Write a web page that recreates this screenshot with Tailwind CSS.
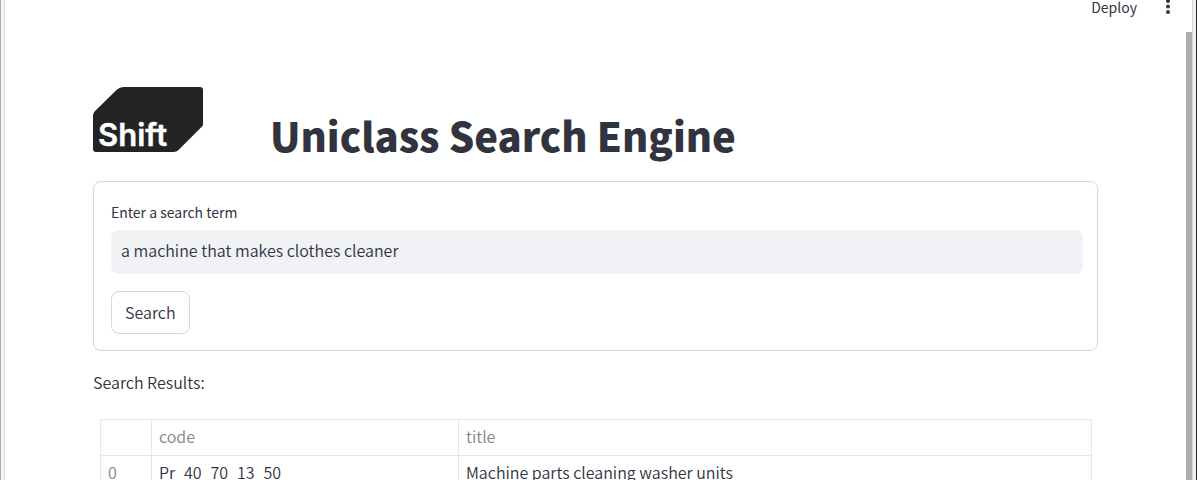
<!DOCTYPE html>
<html lang="en">
<head>
<meta charset="utf-8">
<meta name="viewport" content="width=device-width, initial-scale=1">
<title>Uniclass Search Engine</title>
<script src="https://cdn.jsdelivr.net/npm/@tailwindcss/browser@4"></script>
</head>
<body class="flex h-screen overflow-hidden bg-white font-['Noto_Sans_CJK_JP','Noto_Sans',sans-serif] text-base font-[350] text-[#31333f]">
  <div class="w-[5px] shrink-0 border-x border-l-[#acabac] border-r-[#dcdadb] bg-[#f5f3f4]"></div>
  <div class="min-w-0 flex-1">
    <header class="flex h-3.5 items-center justify-end gap-[27px] pr-3.5">
      <button type="button" class="text-sm leading-3.5 font-normal">Deploy</button>
      <button type="button" aria-label="Main menu" class="flex">
        <svg class="h-4 w-2" viewBox="0 0 8 16" fill="currentColor"><circle cx="4" cy="2" r="2"/><circle cx="4" cy="7.500" r="2"/><circle cx="4" cy="13" r="2"/></svg>
      </button>
    </header>
    <main class="px-[88px] pt-[73px]">
      <div class="flex gap-[67px]">
        <svg class="h-[65px] w-[110px] shrink-0" viewBox="0 0 110 65" role="img" aria-label="Shift">
          <path fill="#232323" d="M30.500 0H107Q110 0 110 3V37Q110 38.500 109 39.500L85.500 63Q83.500 65 80.500 65H3Q0 65 0 62V28.500Q0 26 2 24L24 2.500Q26.500 0 30.500 0Z"/>
          <text x="5" y="59" fill="#fff" stroke="#fff" stroke-width=".4" font-family="Inter, sans-serif" font-size="31" font-weight="600">Shift</text>
        </svg>
        <h1 class="pt-5 text-[40px] leading-[56px] font-black">Uniclass Search Engine</h1>
      </div>
      <form class="mt-[18px] rounded-lg border border-[#d5d6d8] pt-5 pr-3.5 pb-4 pl-[17px]">
        <label for="term" class="block text-sm leading-5 font-normal">Enter a search term</label>
        <input id="term" type="text" value="a machine that makes clothes cleaner" class="mt-2 block h-11 w-full rounded-lg bg-[#f0f2f6] px-2.5 pb-1 outline-none">
        <button type="button" class="mt-[17px] block h-[43px] rounded-lg border border-[#d5d6d8] px-[13px] pb-0.5">Search</button>
      </form>
      <p class="mt-5 leading-[22px]">Search Results:</p>
      <div class="mt-[26px] pr-1.5 pl-[7px]">
        <table class="w-full table-fixed border-collapse text-left leading-6">
          <colgroup><col class="w-[51px]"><col class="w-[307px]"><col></colgroup>
          <thead>
            <tr class="h-9 text-[#83848c]">
              <th class="border border-[#e6e6e8] px-[7px]"></th>
              <th class="border border-[#e6e6e8] px-[7px] pb-1 font-[350]">code</th>
              <th class="border border-[#e6e6e8] px-[7px] pb-1 font-[350]">title</th>
            </tr>
          </thead>
          <tbody>
            <tr class="h-9">
              <th class="border border-[#e6e6e8] px-[7px] pb-1 font-[350] text-[#83848c]">0</th>
              <td class="border border-[#e6e6e8] px-[7px] pb-1">Pr_40_70_13_50</td>
              <td class="border border-[#e6e6e8] px-[7px] pb-1">Machine parts cleaning washer units</td>
            </tr>
          </tbody>
        </table>
      </div>
    </main>
  </div>
  <div class="w-1.5 shrink-0 pt-8"><div class="h-full bg-[#adacb1]"></div></div>
  <div class="w-[5px] shrink-0 border-r border-l border-l-[#d8d6d7] border-r-[#28292b] bg-[#f3f1f2]"></div>
</body>
</html>
